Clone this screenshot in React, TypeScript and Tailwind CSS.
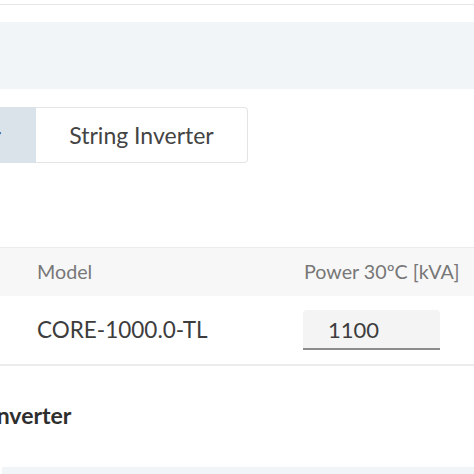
import React from "react";

export default function App() {
  return (
    <div
      className="w-[474px] h-[474px] overflow-hidden bg-white text-[#3d3d3d]"
      style={{ fontFamily: "Lato, 'Open Sans', sans-serif" }}
    >
      <div className="h-[5px] border-b border-[#e6e6e6]" />

      <div className="mt-[17px] h-[67px] bg-[#f2f5f8]" />

      <div className="mt-[18px] flex h-[56px]">
        <div className="-ml-[200px] flex w-[236px] shrink-0 items-center justify-end bg-[#dbe3ea] pr-[35px] text-[23px]">
          Central Inverter
        </div>
        <button className="flex w-[212px] shrink-0 items-center justify-center rounded-r-[4px] border border-l-0 border-[#e4e4e4] text-[23px] text-[#444]">
          String Inverter
        </button>
      </div>

      <div className="mt-[84px] border-t border-[#ececec]">
        <div className="flex h-[48px] items-center bg-[#f7f7f7] text-[19.7px] text-[#777]">
          <div className="w-[304px] pl-[37px]">Model</div>
          <div>Power 30ºC [kVA]</div>
        </div>
        <div className="flex h-[70px] items-center border-b-2 border-[#ececec] text-[22.5px]">
          <div className="w-[303px] pl-[37px]">CORE-1000.0-TL</div>
          <div className="flex h-[40px] w-[137px] items-center rounded-t-[4px] border-b-2 border-[#8c8c8c] bg-[#f4f4f4] pl-[25px] text-[22px]">
            1100
          </div>
        </div>
      </div>

      <h3 className="-ml-[10px] mt-[34px] text-[23px] font-bold leading-[30px] text-[#2e2e2e]">
        Inverter
      </h3>

      <div className="ml-[2px] mt-[37px] h-[8px] bg-[#f2f5f8]" />
    </div>
  );
}
